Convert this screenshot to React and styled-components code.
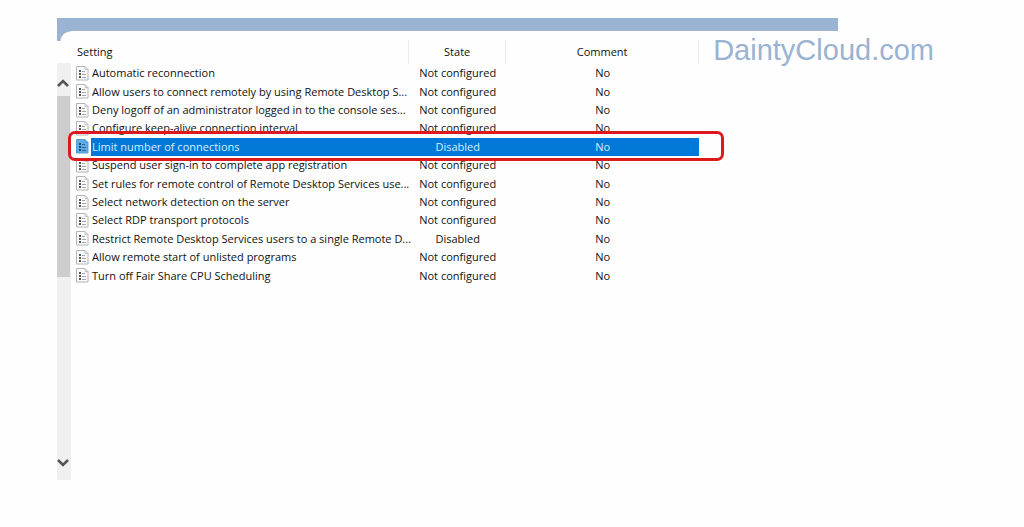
import styled, { createGlobalStyle } from "styled-components";

const GlobalStyle = createGlobalStyle`
  body {
    margin: 0;
    background: #fefefe;
    font-family: "Open Sans", "Noto Sans", sans-serif;
    font-size: 11px;
    color: #111;
  }
`;

const Page = styled.main`
  box-sizing: border-box;
  padding: 18px 90px 0 57px;
`;

const TopBar = styled.div`
  width: 89%;
  height: 13px;
  background: #9ab3d2;
`;

const Body = styled.div`
  display: flex;
  height: calc(100vh - 78px);
  min-height: 300px;
`;

const Side = styled.div`
  display: flex;
  flex-direction: column;
  width: 14px;
  flex-shrink: 0;
`;

const Corner = styled.div`
  height: 10px;
  margin-bottom: 22px;
  background: radial-gradient(
    ellipse 11px 10px at 14px 10px,
    #fefefe 90%,
    #9ab3d2 100%
  );
`;

const ScrollBar = styled.div`
  flex: 1;
  display: flex;
  flex-direction: column;
  background: #f0f0f0;
`;

const ArrowButton = styled.button`
  display: flex;
  align-items: center;
  height: ${(props) => props.$height}px;
  padding: ${(props) => props.$padding};
  border: none;
  background: none;
  box-sizing: border-box;
`;

const Track = styled.div`
  flex: 1;
`;

const Thumb = styled.div`
  width: 13px;
  height: 52%;
  background: #cdcdcd;
`;

const List = styled.div`
  flex: 1;
  min-width: 0;
  padding-top: 9px;
`;

const Table = styled.table`
  width: 100%;
  height: 245px;
  table-layout: fixed;
  border-collapse: separate;
  border-spacing: 0;
`;

const HeadCell = styled.th`
  box-sizing: border-box;
  height: 24px;
  width: ${(props) => props.$width || "auto"};
  padding: ${(props) => (props.$left ? "0 0 0 6px" : "0")};
  border-right: 1px solid #ececec;
  text-align: ${(props) => (props.$left ? "left" : "center")};
  font-weight: normal;
  line-height: 16px;
`;

const Row = styled.tr`
  position: relative;
  color: ${(props) => (props.$selected ? "#d8f0ff" : "inherit")};
`;

const Cell = styled.td`
  padding: 0;
  text-align: center;
  line-height: 16px;
  white-space: nowrap;
  background: ${(props) => (props.$selected ? "#0078d7" : "none")};
`;

const NameCell = styled(Cell)`
  text-align: left;
  background: ${(props) =>
    props.$selected
      ? "linear-gradient(to right, transparent 20px, #0078d7 20px)"
      : "none"};
`;

const Name = styled.div`
  display: flex;
  align-items: center;
  gap: 3px;
  padding-left: 5px;
`;

const Highlight = styled.div`
  position: absolute;
  z-index: 1;
  inset: -7px -25px -5px -3px;
  border: 3px solid #dc1a1e;
  border-radius: 7px;
  pointer-events: none;
`;

const Brand = styled.div`
  padding: 2px 0 0 14px;
  font-family: "Liberation Sans", Arial, sans-serif;
  font-size: 29px;
  line-height: 34px;
  color: #9ab3d2;
`;

const Icon = styled.svg`
  flex-shrink: 0;
`;

const SettingIcon = ({ selected }) => (
  <Icon width="13" height="15" viewBox="0 0 13 15" aria-hidden="true">
    <path
      d="M.5 .5h8.500l3 3v10.500H.5z"
      fill={selected ? "#62abe2" : "#fbfbfb"}
      stroke={selected ? "#4f9bd4" : "#b4b4b4"}
    />
    <path d="M9 .5v3h3" fill="none" stroke={selected ? "#4f9bd4" : "#c4c4c4"} />
    <path
      d="M3 4h2v2H3zM3 7h2v2H3zM3 10h2v2H3z"
      fill={selected ? "#174f80" : "#555"}
    />
    <path
      d="M6 5.5h3M6 8.5h4M6 11.5h4"
      stroke={selected ? "#28669a" : "#a4a4a4"}
    />
  </Icon>
);

const Chevron = ({ down }) => (
  <svg width="12" height="9" viewBox="0 0 12 9" aria-hidden="true">
    <path
      d={down ? "M1 2l5 5 5-5" : "M1 7l5-5 5 5"}
      fill="none"
      stroke="#555"
      strokeWidth="2.6"
    />
  </svg>
);

const settings = [
  { name: "Automatic reconnection", state: "Not configured" },
  {
    name: "Allow users to connect remotely by using Remote Desktop S...",
    state: "Not configured",
  },
  {
    name: "Deny logoff of an administrator logged in to the console ses...",
    state: "Not configured",
  },
  { name: "Configure keep-alive connection interval", state: "Not configured" },
  { name: "Limit number of connections", state: "Disabled", selected: true },
  {
    name: "Suspend user sign-in to complete app registration",
    state: "Not configured",
  },
  {
    name: "Set rules for remote control of Remote Desktop Services use...",
    state: "Not configured",
  },
  { name: "Select network detection on the server", state: "Not configured" },
  { name: "Select RDP transport protocols", state: "Not configured" },
  {
    name: "Restrict Remote Desktop Services users to a single Remote D...",
    state: "Disabled",
  },
  { name: "Allow remote start of unlisted programs", state: "Not configured" },
  { name: "Turn off Fair Share CPU Scheduling", state: "Not configured" },
];

const App = () => {
  return (
    <>
      <GlobalStyle />
      <Page>
        <TopBar />
        <Body>
          <Side>
            <Corner />
            <ScrollBar>
              <ArrowButton aria-label="Scroll up" $height={33} $padding="7px 0 0">
                <Chevron />
              </ArrowButton>
              <Track>
                <Thumb />
              </Track>
              <ArrowButton aria-label="Scroll down" $height={36} $padding="0">
                <Chevron down />
              </ArrowButton>
            </ScrollBar>
          </Side>
          <List>
            <Table>
              <thead>
                <tr>
                  <HeadCell $left>Setting</HeadCell>
                  <HeadCell $width="97px">State</HeadCell>
                  <HeadCell $width="193px">Comment</HeadCell>
                </tr>
              </thead>
              <tbody>
                {settings.map(({ name, state, selected }) => (
                  <Row key={name} $selected={selected}>
                    <NameCell $selected={selected}>
                      <Name>
                        <SettingIcon selected={selected} />
                        {name}
                      </Name>
                      {selected && <Highlight />}
                    </NameCell>
                    <Cell $selected={selected}>{state}</Cell>
                    <Cell $selected={selected}>No</Cell>
                  </Row>
                ))}
              </tbody>
            </Table>
          </List>
          <Brand>DaintyCloud.com</Brand>
        </Body>
      </Page>
    </>
  );
};

export default App;
